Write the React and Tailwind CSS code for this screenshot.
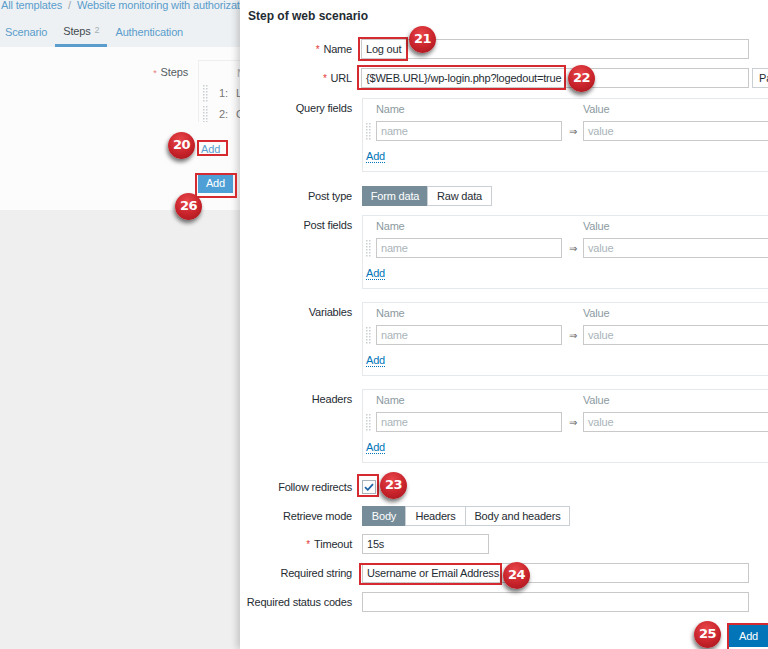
import React from "react";

function Badge({ n, className }) {
  return (
    <div
      className={
        "pointer-events-none absolute z-30 flex h-[27px] w-[27px] items-center justify-center rounded-full bg-[radial-gradient(circle_at_45%_30%,#e8464a_0%,#c8232b_55%,#9e151b_100%)] pb-[1px] font-['DejaVu_Sans',sans-serif] text-[13px] font-bold tracking-[-0.5px] text-white shadow-[-1px_3px_4px_rgba(0,0,0,0.55)] " +
        className
      }
    >
      {n}
    </div>
  );
}

function RedBox({ className }) {
  return (
    <div
      className={
        "pointer-events-none absolute z-20 border-2 border-[#d42a30] " + className
      }
    />
  );
}

function DragHandle() {
  const dots = [];
  for (let r = 0; r < 6; r++) {
    dots.push(<rect key={"a" + r} x="0" y={r * 3} width="1.5" height="1.5" fill="#c9cfd2" />);
    dots.push(<rect key={"b" + r} x="3" y={r * 3} width="1.5" height="1.5" fill="#c9cfd2" />);
  }
  return (
    <svg width="5" height="17" viewBox="0 0 5 17" className="block shrink-0">
      {dots}
    </svg>
  );
}

function Label({ children, req, className = "" }) {
  return (
    <div className={"w-[112px] shrink-0 whitespace-nowrap text-right text-[#1f2c33] " + className}>
      {req && <span className="mr-[4px] text-[10px] text-[#e33734]">*</span>}
      {children}
    </div>
  );
}

function TextBox({ className = "", children, placeholder }) {
  return (
    <div
      className={
        "flex h-[20px] shrink-0 items-center overflow-hidden whitespace-nowrap border border-[#c9c9c9] bg-white px-[4px] " +
        className
      }
    >
      {children ? (
        <span className="text-[#1f2c33]">{children}</span>
      ) : (
        <span className="text-[#aab4b9]">{placeholder}</span>
      )}
    </div>
  );
}

function PairBox() {
  return (
    <div className="w-[470px] shrink-0 border border-[#e6e9eb] pb-[8px] pl-[3px] pt-[3px]">
      <div className="flex h-[14px] items-center text-[#8c9aa1]">
        <span className="ml-[10px] w-[207px]">Name</span>
        <span>Value</span>
      </div>
      <div className="mt-[5px] flex items-center">
        <div className="flex w-[10px] shrink-0 items-center">
          <DragHandle />
        </div>
        <TextBox className="w-[186px]" placeholder="name" />
        <span className="w-[21px] shrink-0 text-center text-[10px] text-[#555]">⇒</span>
        <TextBox className="w-[200px]" placeholder="value" />
      </div>
      <div className="mt-[8px] flex h-[14px] items-center">
        <span className="border-b border-dotted border-[#0275b8] leading-[12px] text-[#0275b8]">
          Add
        </span>
      </div>
    </div>
  );
}

function Segmented({ items, widths }) {
  return (
    <div className="flex h-[20px]">
      {items.map((it, i) => (
        <div
          key={it}
          className={
            "flex shrink-0 items-center justify-center border " +
            widths[i] +
            " " +
            (i === 0
              ? "border-[#768d99] bg-[#768d99] text-white"
              : "-ml-px border-[#c9cfd2] bg-white text-[#1f2c33]")
          }
        >
          {it}
        </div>
      ))}
    </div>
  );
}

function LeftPanel() {
  return (
    <div className="flex w-[240px] shrink-0 flex-col overflow-hidden bg-[#efefef] text-[11px] tracking-[-0.15px]">
      <div className="bg-[#eef1f3]">
        <div className="flex h-[14px] items-start whitespace-nowrap pl-[1px] leading-[11px] text-[#5a9dcc]">
          <span>All templates</span>
          <span className="mx-[6px] text-[#9aa5ab]">/</span>
          <span>Website monitoring with authorizat</span>
        </div>
        <div className="flex h-[33px] items-end whitespace-nowrap">
          <div className="-ml-[3px] flex h-[33px] items-center px-[8px] pt-[4px] text-[#5a9dcc]">
            Scenario
          </div>
          <div className="flex h-[33px] items-center border-b-[3px] border-[#5a9dcc] px-[8px] pt-[4px] text-[#444c50]">
            Steps<span className="ml-[4px] text-[9px] text-[#a4afb4]">2</span>
          </div>
          <div className="flex h-[33px] items-center px-[8px] pt-[4px] text-[#5a9dcc]">
            Authentication
          </div>
        </div>
      </div>
      <div className="flex h-[163px] bg-[#fcfcfc]">
        <div className="w-[188px] shrink-0 whitespace-nowrap pt-[17px] text-right text-[#555c60]">
          <span className="mr-[4px] text-[9px] text-[#e87a7a]">*</span>Steps
        </div>
        <div className="ml-[10px] flex flex-col">
          <div className="mt-[13px] h-[62px] w-[60px] overflow-hidden whitespace-nowrap border-l border-t border-[#eeeeee] pl-[4px]">
            <div className="ml-[34px] mt-[4px] text-[#aaa]">Name</div>
            <div className="mt-[4px] flex h-[16px] items-center">
              <DragHandle />
              <span className="ml-[11px] text-[#777]">1:</span>
              <span className="ml-[8px] text-[#777]">Log in</span>
            </div>
            <div className="mt-[5px] flex h-[16px] items-center">
              <DragHandle />
              <span className="ml-[11px] text-[#777]">2:</span>
              <span className="ml-[8px] text-[#777]">Check</span>
            </div>
          </div>
          <div className="ml-[3px] mt-[19px] text-[#5a9dcc]">Add</div>
          <div className="mt-[16px] flex h-[19px] w-[35px] items-center justify-center bg-[#4e9fd6] text-white">
            Add
          </div>
        </div>
      </div>
      <div className="flex-1 bg-[#efefef]" />
    </div>
  );
}

function Dialog() {
  return (
    <div className="relative z-10 flex w-[528px] shrink-0 flex-col overflow-hidden bg-white text-[11px] tracking-[-0.2px] shadow-[-3px_0_7px_rgba(0,0,0,0.18)]">
      <div className="pl-[8px] pt-[8px] text-[12px] font-bold leading-[16px] tracking-normal text-[#1f2c33]">
        Step of web scenario
      </div>

      <div className="mt-[15px] flex items-center">
        <Label req>Name</Label>
        <TextBox className="ml-[9px] w-[388px]">Log out</TextBox>
      </div>

      <div className="mt-[9px] flex items-center">
        <Label req>URL</Label>
        <TextBox className="ml-[9px] w-[388px]">{"{$WEB.URL}/wp-login.php?logedout=true"}</TextBox>
        <div className="ml-[3px] flex h-[20px] w-[50px] shrink-0 items-center border border-[#c9cfd2] bg-white pl-[6px] text-[#1f2c33]">
          Parse
        </div>
      </div>

      <div className="mt-[10px] flex items-start">
        <Label className="pt-[1px] leading-[18px]">Query fields</Label>
        <div className="ml-[10px]">
          <PairBox />
        </div>
      </div>

      <div className="mt-[14px] flex items-center">
        <Label>Post type</Label>
        <div className="ml-[10px]">
          <Segmented items={["Form data", "Raw data"]} widths={["w-[66px]", "w-[65px]"]} />
        </div>
      </div>

      <div className="mt-[9px] flex items-start">
        <Label className="pt-[1px] leading-[18px]">Post fields</Label>
        <div className="ml-[10px]">
          <PairBox />
        </div>
      </div>

      <div className="mt-[13px] flex items-start">
        <Label className="pt-[1px] leading-[18px]">Variables</Label>
        <div className="ml-[10px]">
          <PairBox />
        </div>
      </div>

      <div className="mt-[13px] flex items-start">
        <Label className="pt-[1px] leading-[18px]">Headers</Label>
        <div className="ml-[10px]">
          <PairBox />
        </div>
      </div>

      <div className="mt-[14px] flex h-[20px] items-center">
        <Label>Follow redirects</Label>
        <div className="ml-[10px] flex h-[14px] w-[14px] shrink-0 items-center justify-center border border-[#a9b4ba] bg-white">
          <svg width="10" height="8" viewBox="0 0 10 8">
            <path d="M1 4.2 L3.8 6.8 L9 1.2" fill="none" stroke="#1f65a6" strokeWidth="1.8" />
          </svg>
        </div>
      </div>

      <div className="mt-[9px] flex items-center">
        <Label>Retrieve mode</Label>
        <div className="ml-[10px]">
          <Segmented
            items={["Body", "Headers", "Body and headers"]}
            widths={["w-[44px]", "w-[61px]", "w-[105px]"]}
          />
        </div>
      </div>

      <div className="mt-[8px] flex items-center">
        <Label req>Timeout</Label>
        <TextBox className="ml-[10px] w-[127px]">15s</TextBox>
      </div>

      <div className="mt-[9px] flex items-center">
        <Label>Required string</Label>
        <TextBox className="ml-[10px] w-[387px]">Username or Email Address</TextBox>
      </div>

      <div className="mt-[9px] flex items-center">
        <Label>Required status codes</Label>
        <TextBox className="ml-[10px] w-[387px]" />
      </div>

      <div className="mt-[13px] flex justify-end">
        <div className="flex h-[22px] w-[39px] shrink-0 items-center justify-center bg-[#0275b8] text-white">
          Add
        </div>
      </div>
    </div>
  );
}

export default function App() {
  return (
    <div className="relative flex h-[649px] w-[768px] overflow-hidden bg-white font-['Liberation_Sans',Arial,sans-serif] text-[11px]">
      <LeftPanel />
      <Dialog />

      <RedBox className="left-[197px] top-[140px] h-[16px] w-[31px]" />
      <RedBox className="left-[195px] top-[173px] h-[25px] w-[42px]" />
      <RedBox className="left-[358px] top-[37px] h-[24px] w-[50px]" />
      <RedBox className="left-[357px] top-[65px] h-[25px] w-[209px]" />
      <RedBox className="left-[357px] top-[474px] h-[23px] w-[22px]" />
      <RedBox className="left-[359px] top-[563px] h-[22px] w-[143px]" />
      <RedBox className="left-[727px] top-[623px] h-[28px] w-[45px]" />

      <Badge n="20" className="left-[168px] top-[132px]" />
      <Badge n="26" className="left-[175px] top-[193px]" />
      <Badge n="21" className="left-[409px] top-[26px]" />
      <Badge n="22" className="left-[568px] top-[65px]" />
      <Badge n="23" className="left-[380px] top-[472px]" />
      <Badge n="24" className="left-[503px] top-[562px]" />
      <Badge n="25" className="left-[694px] top-[621px]" />
    </div>
  );
}
